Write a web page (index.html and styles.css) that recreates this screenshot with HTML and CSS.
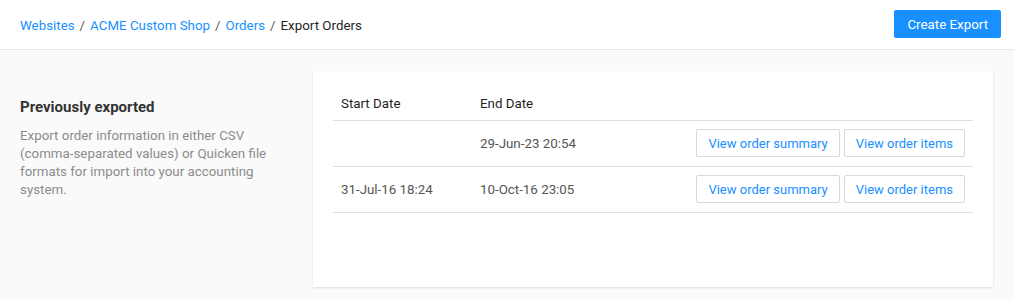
FILE: index.html
```html
<!DOCTYPE html>
<html>
<head>
<meta charset="utf-8">
<link rel="stylesheet" href="styles.css">
</head>
<body>
<header class="topbar">
  <nav class="crumbs">
    <a href="#">Websites</a><span class="sep">/</span><a href="#">ACME Custom Shop</a><span class="sep">/</span><a href="#">Orders</a><span class="sep">/</span><span class="current">Export Orders</span>
  </nav>
  <button class="btn-primary">Create Export</button>
</header>
<main class="content">
  <section class="intro">
    <h2 class="intro-title">Previously exported</h2>
    <p class="intro-text">Export order information in either CSV (comma-separated values) or Quicken file formats for import into your accounting system.</p>
  </section>
  <section class="card">
    <table class="exports">
      <thead>
        <tr><th class="col-start">Start Date</th><th>End Date</th><th></th></tr>
      </thead>
      <tbody>
        <tr>
          <td class="col-start"></td>
          <td>29-Jun-23 20:54</td>
          <td class="actions"><button class="btn-ghost">View order summary</button><button class="btn-ghost">View order items</button></td>
        </tr>
        <tr>
          <td class="col-start">31-Jul-16 18:24</td>
          <td>10-Oct-16 23:05</td>
          <td class="actions"><button class="btn-ghost">View order summary</button><button class="btn-ghost">View order items</button></td>
        </tr>
      </tbody>
    </table>
  </section>
</main>
</body>
</html>
```
FILE: styles.css
```css
* { box-sizing: border-box; }
html, body { margin: 0; padding: 0; }
body {
  font-family: Roboto, "Liberation Sans", Arial, sans-serif;
  font-size: 13.33px;
  color: #262626;
  background: #fafafa;
  height: 300px;
  overflow: hidden;
}
.topbar {
  height: 50px;
  background: #fff;
  border-bottom: 1px solid #e8e8e8;
  display: flex;
  align-items: center;
  justify-content: space-between;
  padding: 0 13px 1px 20px;
}
.crumbs { font-size: 13.33px; color: #262626; padding-top: 3px; }
.crumbs a { color: #1890ff; text-decoration: none; }
.crumbs .sep { margin: 0 5px; color: #595959; }
.crumbs .current { color: #262626; }
.btn-primary {
  font-family: inherit;
  font-size: 13.33px;
  color: #fff;
  background: #1890ff;
  border: none;
  border-radius: 2px;
  height: 28px;
  padding: 0 13px;
  cursor: pointer;
}
.content {
  display: grid;
  grid-template-columns: 293px 1fr;
  padding: 21px 21px 0 20px;
}
.intro { padding-top: 26px; padding-right: 20px; }
.intro-title {
  margin: 0 0 10px;
  font-size: 15px;
  font-weight: 700;
  color: #333;
  line-height: 20px;
}
.intro-text {
  margin: 0;
  font-size: 13.33px;
  line-height: 18px;
  color: #8c8c8c;
}
.card {
  background: #fff;
  height: 216px;
  padding: 20px 20px;
  box-shadow: 0 1px 2px rgba(0,0,0,0.12);
}
.exports {
  width: 100%;
  border-collapse: collapse;
}
.exports th {
  text-align: left;
  font-weight: 400;
  color: #1f1f1f;
  height: 29px;
  padding: 0 8px 3px;
  border-bottom: 1px solid #e0e0e0;
}
.exports td {
  height: 46px;
  padding: 0 8px;
  color: #555;
  border-bottom: 1px solid #e0e0e0;
}
.exports .col-start { width: 139px; }
.actions { text-align: right; white-space: nowrap; }
.btn-ghost {
  font-family: inherit;
  font-size: 13px;
  color: #1890ff;
  background: #fff;
  border: 1px solid #d9d9d9;
  border-radius: 2px;
  height: 28px;
  padding: 0 11px;
  margin-left: 4px;
  cursor: pointer;
}
```
